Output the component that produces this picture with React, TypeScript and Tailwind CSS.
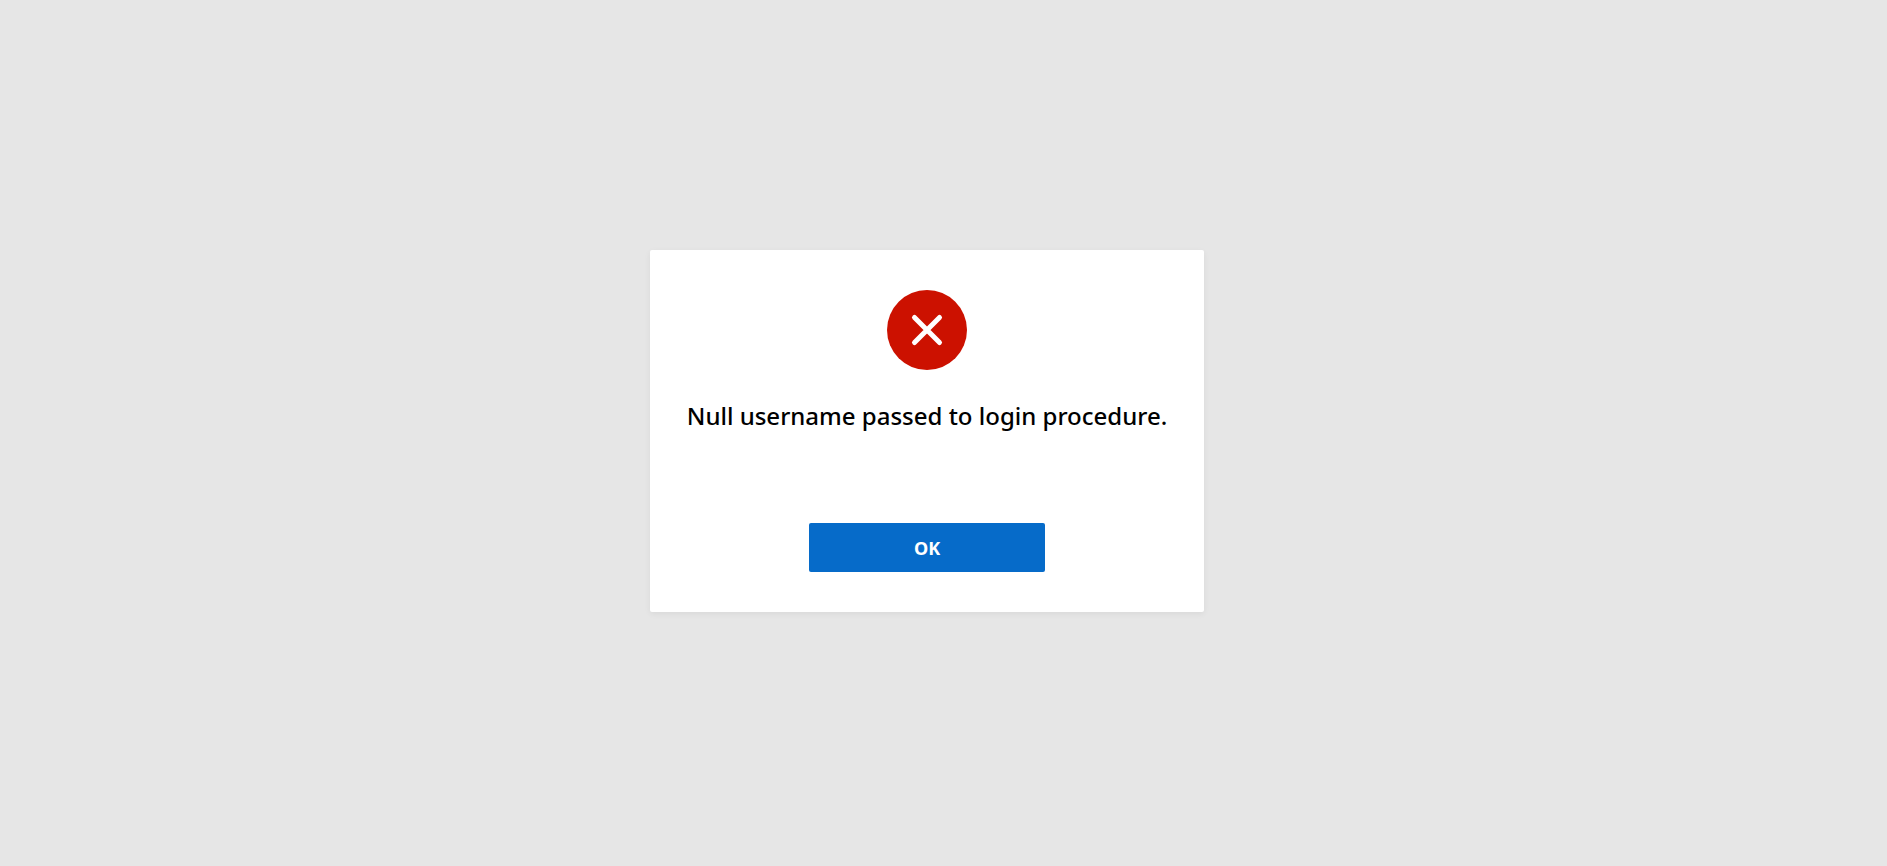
export default function App() {
  return (
    <main className="flex min-h-screen items-center justify-center bg-[#e6e6e6] pr-[33px] pb-1 font-['Noto_Sans','Open_Sans',sans-serif]">
      <section
        role="alertdialog"
        aria-labelledby="message"
        className="flex w-full max-w-[554px] flex-col items-center rounded-xs bg-white px-8 py-10 shadow-[0_2px_6px_rgba(0,0,0,0.06)]"
      >
        <svg viewBox="0 0 80 80" className="size-20" aria-hidden="true">
          <circle cx="40" cy="40" r="40" fill="#cc1100" />
          <path d="M27.5 27.5 52.5 52.5M52.5 27.5 27.5 52.5" fill="none" stroke="#fff" strokeWidth="5" strokeLinecap="round" />
        </svg>
        <h1 id="message" className="mt-7 text-center text-2xl leading-9 font-medium text-black">
          Null username passed to login procedure.
        </h1>
        <button
          type="button"
          className="mt-[89px] h-[49px] w-[236px] rounded-xs bg-[#066bc9] text-lg font-bold text-white"
        >
          OK
        </button>
      </section>
    </main>
  );
}
